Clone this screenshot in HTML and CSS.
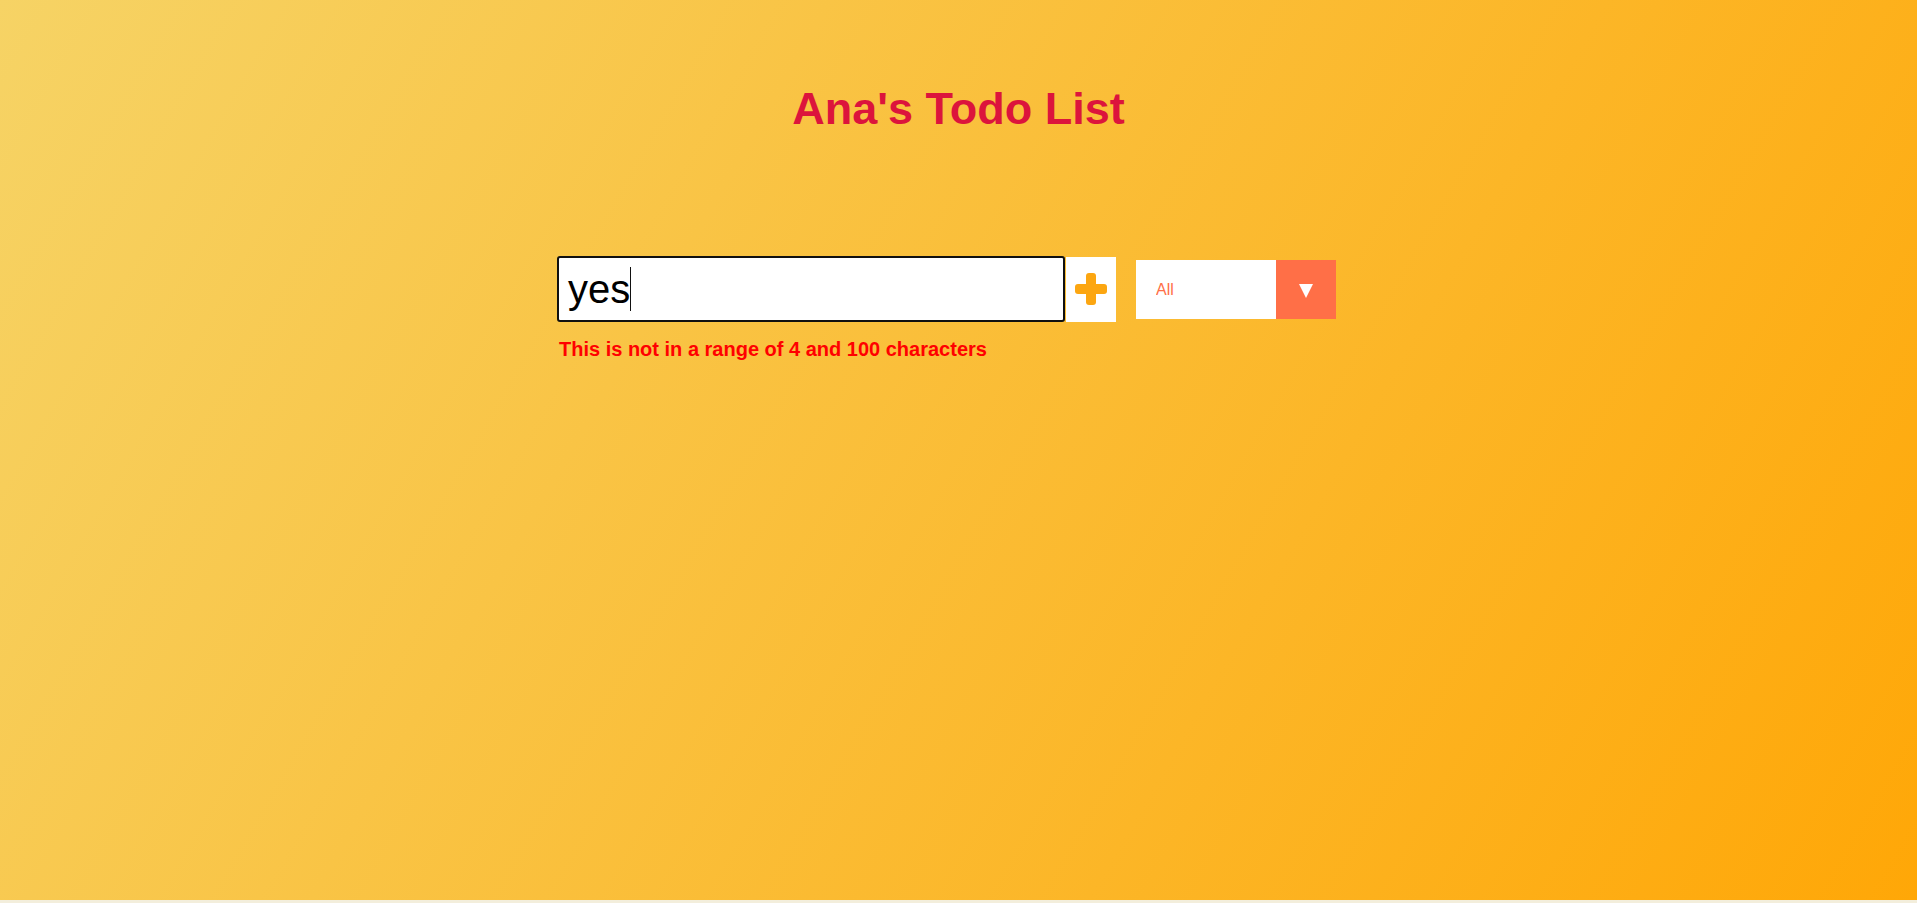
FILE: index.html
```html
<!DOCTYPE html>
<html lang="en">
<head>
    <meta charset="UTF-8">
    <meta name="viewport" content="width=device-width, initial-scale=1.0">
    <title>Ana's Todo List</title>
    <link rel="stylesheet" href="styles.css">
</head>
<body>

    <header>
        <h1>Ana's Todo List</h1>
    </header>

    <form class="todo-form">
        <div class="input-group">
            <div class="input-row">
                <div class="todo-input">yes<span class="caret"></span></div>
                <button type="button" class="todo-button">
                    <svg width="32" height="32" viewBox="0 0 32 32">
                        <rect x="11" y="0" width="10" height="32" rx="3" fill="#fca611"/>
                        <rect x="0" y="11" width="32" height="10" rx="3" fill="#fca611"/>
                    </svg>
                </button>
            </div>
            <p class="error">This is not in a range of 4 and 100 characters</p>
        </div>

        <div class="filter">
            <select name="todos" class="filter-todo">
                <option value="all">All</option>
                <option value="completed">Completed</option>
                <option value="uncompleted">Uncompleted</option>
            </select>
            <span class="filter-arrow">
                <svg width="14" height="14" viewBox="0 0 14 14">
                    <polygon points="0,0 14,0 7,14" fill="white"/>
                </svg>
            </span>
        </div>
    </form>

</body>
</html>
```

FILE: styles.css
```css
html {
    background-color: #f3eedc;
}
body {
    margin: 0;
    height: 900px;
    font-family: "Liberation Sans", Arial, sans-serif;
    background-image: linear-gradient(120deg, #f6d365 0%, #ffa707 100%);
}
header {
    display: flex;
    justify-content: center;
}
header h1 {
    margin: 86px 0 0;
    font-size: 45px;
    line-height: 45px;
    color: crimson;
}
.todo-form {
    display: flex;
    justify-content: center;
    align-items: flex-start;
    margin-top: 125px;
}
.input-group {
    display: flex;
    flex-direction: column;
}
.input-row {
    display: flex;
    align-items: center;
    gap: 1px;
}
.todo-input {
    box-sizing: border-box;
    width: 508px;
    height: 66px;
    padding: 0 9px;
    border: 2px solid #101010;
    border-radius: 3px;
    background: white;
    font-size: 40px;
    line-height: 63px;
    color: black;
}
.caret {
    display: inline-block;
    width: 1px;
    height: 44px;
    background: #111;
    vertical-align: -8px;
}
.todo-button {
    width: 50px;
    height: 65px;
    padding: 0;
    border: none;
    background: white;
    display: flex;
    align-items: center;
    justify-content: center;
    cursor: pointer;
}
.todo-button svg {
    display: block;
    margin: -1px 1px 0 0;
}
.error {
    margin: 16px 0 0 2px;
    font-size: 20px;
    font-weight: bold;
    color: red;
}
.filter {
    display: flex;
    margin: 4px 24px 0 20px;
}
.filter-todo {
    appearance: none;
    -webkit-appearance: none;
    width: 140px;
    height: 59px;
    padding: 0 20px;
    border: none;
    border-radius: 0;
    outline: none;
    background: white;
    color: #ff6f47;
    font-family: "Liberation Sans", Arial, sans-serif;
    font-size: 16px;
    cursor: pointer;
}
.filter-arrow {
    width: 60px;
    height: 59px;
    background: #ff6f47;
    display: flex;
    align-items: center;
    justify-content: center;
}
.filter-arrow svg {
    display: block;
    margin-top: 2px;
}
```
